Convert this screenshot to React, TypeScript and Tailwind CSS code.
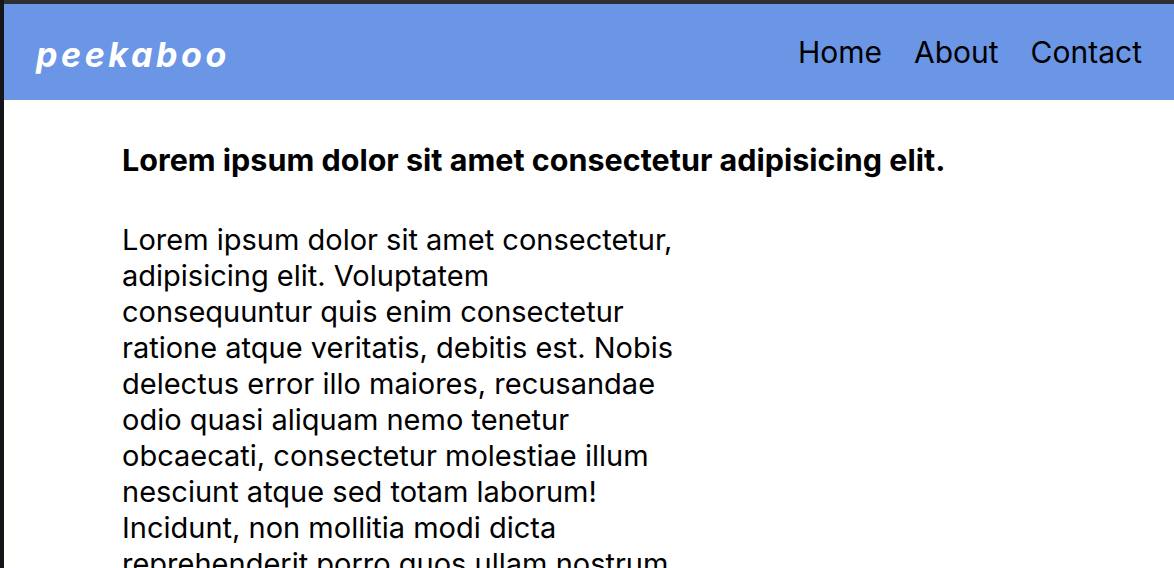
export default function App() {
  return (
    <div className="flex h-[568px] w-[1174px] overflow-hidden bg-[#1b1c20]" style={{ fontFamily: 'Inter, "Noto Sans", sans-serif' }}>
      <div className="w-[4px] shrink-0 bg-[#15161a]" />
      <div className="flex min-w-0 flex-1 flex-col pt-[4px] bg-[#2e2f33]">
        <div className="flex flex-1 flex-col bg-white">
          {/* Header */}
          <header className="flex h-[96px] shrink-0 items-center justify-between bg-[#6b96e6] pl-[32px] pr-[32px]">
            <h1 className="pt-[4px] text-[34px] font-bold italic tracking-[3.6px] text-white">peekaboo</h1>
            <nav className="flex items-center gap-[32px] text-[30px] text-black">
              <a>Home</a>
              <a>About</a>
              <a>Contact</a>
            </nav>
          </header>

          {/* Content */}
          <main className="pl-[118px] pt-[42px]">
            <h2 className="text-[30.5px] font-bold leading-[36px] text-black">
              Lorem ipsum dolor sit amet consectetur adipisicing elit.
            </h2>
            <p className="mt-[44px] w-[562px] text-[29px] leading-[36px] text-black">
              Lorem ipsum dolor sit amet consectetur, adipisicing elit. Voluptatem consequuntur quis enim consectetur
              ratione atque veritatis, debitis est. Nobis delectus error illo maiores, recusandae odio quasi aliquam nemo
              tenetur obcaecati, consectetur molestiae illum nesciunt atque sed totam laborum! Incidunt, non mollitia modi
              dicta reprehenderit porro quos ullam nostrum, voluptate quae eaque nihil explicabo vel.
            </p>
          </main>
        </div>
      </div>
    </div>
  );
}
